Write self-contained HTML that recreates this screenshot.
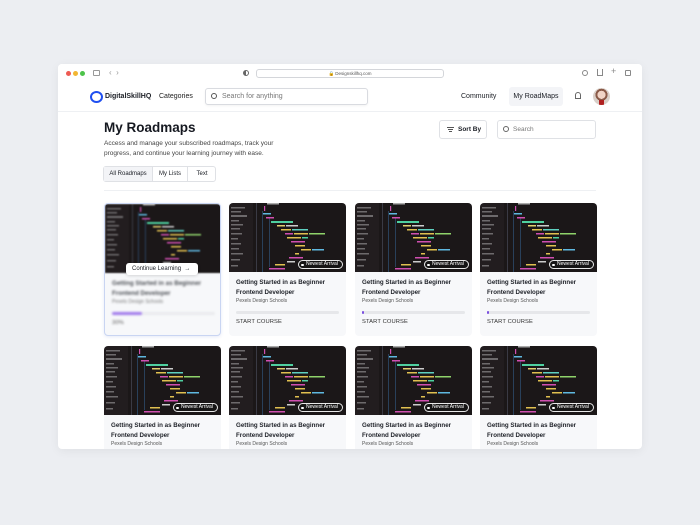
<!DOCTYPE html>
<html><head><meta charset="utf-8"><style>
*{margin:0;padding:0;box-sizing:border-box}
body{width:700px;height:525px;background:#eceef2;font-family:"Liberation Sans",sans-serif;position:relative;overflow:hidden;color:#1a1d24}
.win{position:absolute;left:58px;top:64px;width:584px;height:385px;background:#fff;border-radius:4px;overflow:hidden;box-shadow:0 2px 10px rgba(0,0,0,.06)}
.tb{position:absolute;left:0;top:0;width:584px;height:18px;background:#fff}
.dot{position:absolute;top:7px;width:5px;height:5px;border-radius:50%}
.url{position:absolute;left:198px;top:5px;width:188px;height:9px;border:1px solid #d4d6da;border-radius:3px;font-size:4.5px;color:#555;text-align:center;line-height:7px}
.nav{position:absolute;top:18px;left:0;width:584px;height:30px;border-bottom:1px solid #eef0f3}
.a{position:absolute}
.card{position:absolute;width:117px;height:133px;background:#f7f8fa;border-radius:4px;overflow:hidden}
.img{position:absolute;left:0;top:0;width:117px;height:69px;filter:blur(.35px)}
.badge{position:absolute;left:69px;top:57px;width:45px;height:9px;border:1px solid #e8e8e8;border-radius:5px;background:rgba(20,20,20,.6);color:#fff;font-size:5px;line-height:7px;padding-left:7px}
.badge:before{content:"";position:absolute;left:2px;top:2.5px;width:2.5px;height:2.5px;background:#fff;border-radius:50%}
.t{position:absolute;left:7px;top:75px;font-size:6.2px;font-weight:bold;line-height:9.5px;color:#1d2027}
.s{position:absolute;left:7px;top:95px;font-size:5px;color:#555}
.bar{position:absolute;left:7px;top:108px;width:103px;height:3px;background:#e6e7ea;border-radius:2px}
.bar i{position:absolute;left:0;top:0;height:3px;width:2px;background:#7a4fe0;border-radius:2px}
.sc{position:absolute;left:7px;top:116px;font-size:5.8px;color:#333;letter-spacing:.1px}
</style></head><body>
<svg width="0" height="0" style="position:absolute"><defs><symbol id="code" viewBox="0 0 117 69">
<rect width="117" height="69" fill="#1b1718"/>
<rect width="24" height="69" fill="#221d1f"/>
<g fill="#6d6a6c"><rect x="2" y="4" width="14" height="1.5"/><rect x="2" y="8" width="10" height="1.5"/><rect x="2" y="12" width="16" height="2"/><rect x="2" y="17" width="8" height="1.5"/><rect x="2" y="21" width="12" height="1.5"/><rect x="2" y="25" width="9" height="1.5"/><rect x="2" y="30" width="11" height="1.5"/><rect x="2" y="35" width="7" height="1.5"/><rect x="2" y="40" width="10" height="1.5"/><rect x="2" y="45" width="8" height="1.5"/><rect x="2" y="50" width="12" height="1.5"/><rect x="2" y="56" width="9" height="1.5"/><rect x="2" y="62" width="7" height="1.5"/></g>
<rect x="27" y="0" width="1" height="69" fill="#3a3a44"/><rect x="33" y="8" width=".8" height="61" fill="#2d4a6a"/><rect x="40" y="14" width=".8" height="50" fill="#2d4a6a"/>
<rect x="35" y="3" width="1.2" height="5" fill="#d04fb0"/><rect x="38" y="0" width="12" height="1.5" fill="#aaa"/>
<rect x="34" y="10" width="8" height="1.5" fill="#5fb8e0"/><rect x="37" y="14" width="8" height="1.5" fill="#d04fb0"/>
<rect x="42" y="18" width="22" height="2" fill="#4fd0a0"/><rect x="48" y="22" width="8" height="1.5" fill="#e0d070"/><rect x="57" y="22" width="12" height="1.5" fill="#ccc"/>
<rect x="52" y="26" width="10" height="1.5" fill="#e0c050"/><rect x="63" y="26" width="16" height="1.5" fill="#5fd0c0"/>
<rect x="56" y="30" width="8" height="1.5" fill="#d04fb0"/><rect x="65" y="30" width="14" height="1.5" fill="#e0c050"/><rect x="80" y="30" width="16" height="1.5" fill="#8fd36a"/>
<rect x="58" y="34" width="14" height="1.5" fill="#e0c050"/><rect x="73" y="34" width="6" height="1.5" fill="#4fd0a0"/>
<rect x="62" y="38" width="14" height="1.5" fill="#d04fb0"/><rect x="66" y="42" width="10" height="1.5" fill="#e0c050"/>
<rect x="72" y="46" width="10" height="1.5" fill="#e0c050"/><rect x="83" y="46" width="12" height="1.5" fill="#5fb8e0"/>
<rect x="66" y="50" width="4" height="1.5" fill="#e0c050"/><rect x="60" y="54" width="14" height="1.5" fill="#d04fb0"/><rect x="58" y="58" width="8" height="1.5" fill="#ccc"/>
<rect x="46" y="61" width="10" height="1.5" fill="#e0c050"/><rect x="40" y="65" width="16" height="1.5" fill="#d04fb0"/>
</symbol></defs></svg>
<div class="win">
 <div class="tb">
  <div class="dot" style="left:8px;background:#ee5a52"></div><div class="dot" style="left:15px;background:#f2b632"></div><div class="dot" style="left:22px;background:#4cc34a"></div>
  <div class="a" style="left:35px;top:6px;width:7px;height:6px;border:1px solid #999;border-radius:1px"></div>
  <div class="a" style="left:51px;top:4px;font-size:8px;color:#999;line-height:9px">‹ &nbsp;›</div>
  <div class="a" style="left:185px;top:6px;width:6px;height:6px;border:1px solid #666;border-radius:50%;background:linear-gradient(90deg,#666 50%,#fff 50%)"></div>
  <div class="url">🔒 Designskillhq.com</div>
  <div class="a" style="left:524px;top:6px;width:6px;height:6px;border:1px solid #888;border-radius:50%"></div>
  <div class="a" style="left:539px;top:5px;width:6px;height:7px;border:1px solid #888;border-top:none"></div>
  <div class="a" style="left:553px;top:2px;font-size:9px;color:#888">+</div>
  <div class="a" style="left:567px;top:6px;width:6px;height:6px;border:1px solid #888;border-radius:1px"></div>
 </div>
 <div class="nav">
  <div class="a" style="left:32px;top:9px;width:13px;height:12px;border:2.5px solid #1f4ff0;border-radius:50%"></div>
  <div class="a" style="left:47px;top:11px;font-size:7px;font-weight:bold">DigitalSkillHQ</div>
  <div class="a" style="left:101px;top:11px;font-size:7px;color:#222">Categories</div>
  <div class="a" style="left:147px;top:6px;width:163px;height:17px;border:1px solid #d9dbe0;border-radius:3px;box-shadow:0 1px 2px rgba(0,0,0,.05);font-size:7px;color:#777;line-height:15px;padding-left:16px">Search for anything
   <div class="a" style="left:5px;top:4px;width:6px;height:6px;border:1.2px solid #555;border-radius:50%"></div></div>
  <div class="a" style="left:403px;top:11px;font-size:7px">Community</div>
  <div class="a" style="left:451px;top:5px;width:54px;height:19px;background:#f3f4f7;border-radius:3px;font-size:7px;line-height:19px;text-align:center">My RoadMaps</div>
  <div class="a" style="left:517px;top:10px;width:6px;height:7px;border:1px solid #666;border-radius:3px 3px 0 0"></div>
  <div class="a" style="left:535px;top:6px;width:17px;height:17px;border-radius:50%;background:radial-gradient(circle at 50% 40%,#f1d4c6 0 30%,#8a5a48 31% 45%,#d9cfc8 46%);overflow:hidden"><div class="a" style="left:6px;top:12px;width:5px;height:5px;background:#b02020"></div></div>
 </div>
 <div class="a" style="left:46px;top:56px;font-size:13.5px;font-weight:bold;color:#151820">My Roadmaps</div>
 <div class="a" style="left:46px;top:75px;font-size:6.5px;line-height:10px;color:#444;width:188px">Access and manage your subscribed roadmaps, track your progress, and continue your learning journey with ease.</div>
 <div class="a" style="left:381px;top:56px;width:48px;height:19px;border:1px solid #dfe1e5;border-radius:3px;font-size:6.5px;font-weight:bold;line-height:17px;padding-left:18px">Sort By
  <div class="a" style="left:7px;top:6px;width:7px;height:1px;background:#555"></div><div class="a" style="left:8px;top:8px;width:5px;height:1px;background:#555"></div><div class="a" style="left:9px;top:10px;width:3px;height:1px;background:#555"></div></div>
 <div class="a" style="left:439px;top:56px;width:99px;height:19px;border:1px solid #dfe1e5;border-radius:3px;font-size:6.5px;color:#777;line-height:17px;padding-left:15px">Search
  <div class="a" style="left:5px;top:5px;width:6px;height:6px;border:1.2px solid #666;border-radius:50%"></div></div>
 <div class="a" style="left:45px;top:102px;width:113px;height:16px;border:1px solid #dfe1e5;border-radius:3px;font-size:6px;line-height:14px">
  <span class="a" style="left:0;top:0;width:49px;height:14px;background:#f3f4f7;border-right:1px solid #dfe1e5;text-align:center">All Roadmaps</span>
  <span class="a" style="left:49px;top:0;width:35px;height:14px;border-right:1px solid #dfe1e5;text-align:center">My Lists</span>
  <span class="a" style="left:84px;top:0;width:28px;height:14px;text-align:center">Text</span></div>
 <div class="a" style="left:46px;top:126px;width:492px;height:1px;background:#eef0f3"></div>

 <div class="card" style="left:46px;top:139px;border:1px solid #c9d5f2;box-shadow:0 1px 3px rgba(80,110,200,.15)">
  <svg class="img" style="filter:blur(.7px)"><use href="#code"/></svg>
  <div style="filter:blur(1.1px);opacity:.8"><div class="t">Getting Started in as Beginner<br>Frontend Developer</div><div class="s">Pexels Design Schools</div>
  <div class="bar" style="top:108px"><i style="width:30px;background:#8a5ae8"></i></div><div class="sc">30%</div></div>
  <div class="a" style="left:21px;top:59px;width:72px;height:12px;background:#fff;border-radius:3px;box-shadow:0 1px 3px rgba(0,0,0,.15);font-size:6px;line-height:12px;padding-left:6px">Continue Learning &nbsp;→</div>
 </div>
 <div class="card" style="left:171px;top:139px"><svg class="img"><use href="#code"/></svg><div class="badge">Newest Arrival</div><div class="t">Getting Started in as Beginner<br>Frontend Developer</div><div class="s">Pexels Design Schools</div><div class="bar"><i style="background:transparent"></i></div><div class="sc">START COURSE</div></div>
 <div class="card" style="left:297px;top:139px"><svg class="img"><use href="#code"/></svg><div class="badge">Newest Arrival</div><div class="t">Getting Started in as Beginner<br>Frontend Developer</div><div class="s">Pexels Design Schools</div><div class="bar"><i></i></div><div class="sc">START COURSE</div></div>
 <div class="card" style="left:422px;top:139px"><svg class="img"><use href="#code"/></svg><div class="badge">Newest Arrival</div><div class="t">Getting Started in as Beginner<br>Frontend Developer</div><div class="s">Pexels Design Schools</div><div class="bar"><i></i></div><div class="sc">START COURSE</div></div>

 <div class="card" style="left:46px;top:282px"><svg class="img"><use href="#code"/></svg><div class="badge">Newest Arrival</div><div class="t">Getting Started in as Beginner<br>Frontend Developer</div><div class="s">Pexels Design Schools</div></div>
 <div class="card" style="left:171px;top:282px"><svg class="img"><use href="#code"/></svg><div class="badge">Newest Arrival</div><div class="t">Getting Started in as Beginner<br>Frontend Developer</div><div class="s">Pexels Design Schools</div></div>
 <div class="card" style="left:297px;top:282px"><svg class="img"><use href="#code"/></svg><div class="badge">Newest Arrival</div><div class="t">Getting Started in as Beginner<br>Frontend Developer</div><div class="s">Pexels Design Schools</div></div>
 <div class="card" style="left:422px;top:282px"><svg class="img"><use href="#code"/></svg><div class="badge">Newest Arrival</div><div class="t">Getting Started in as Beginner<br>Frontend Developer</div><div class="s">Pexels Design Schools</div></div>
</div>
</body></html>
